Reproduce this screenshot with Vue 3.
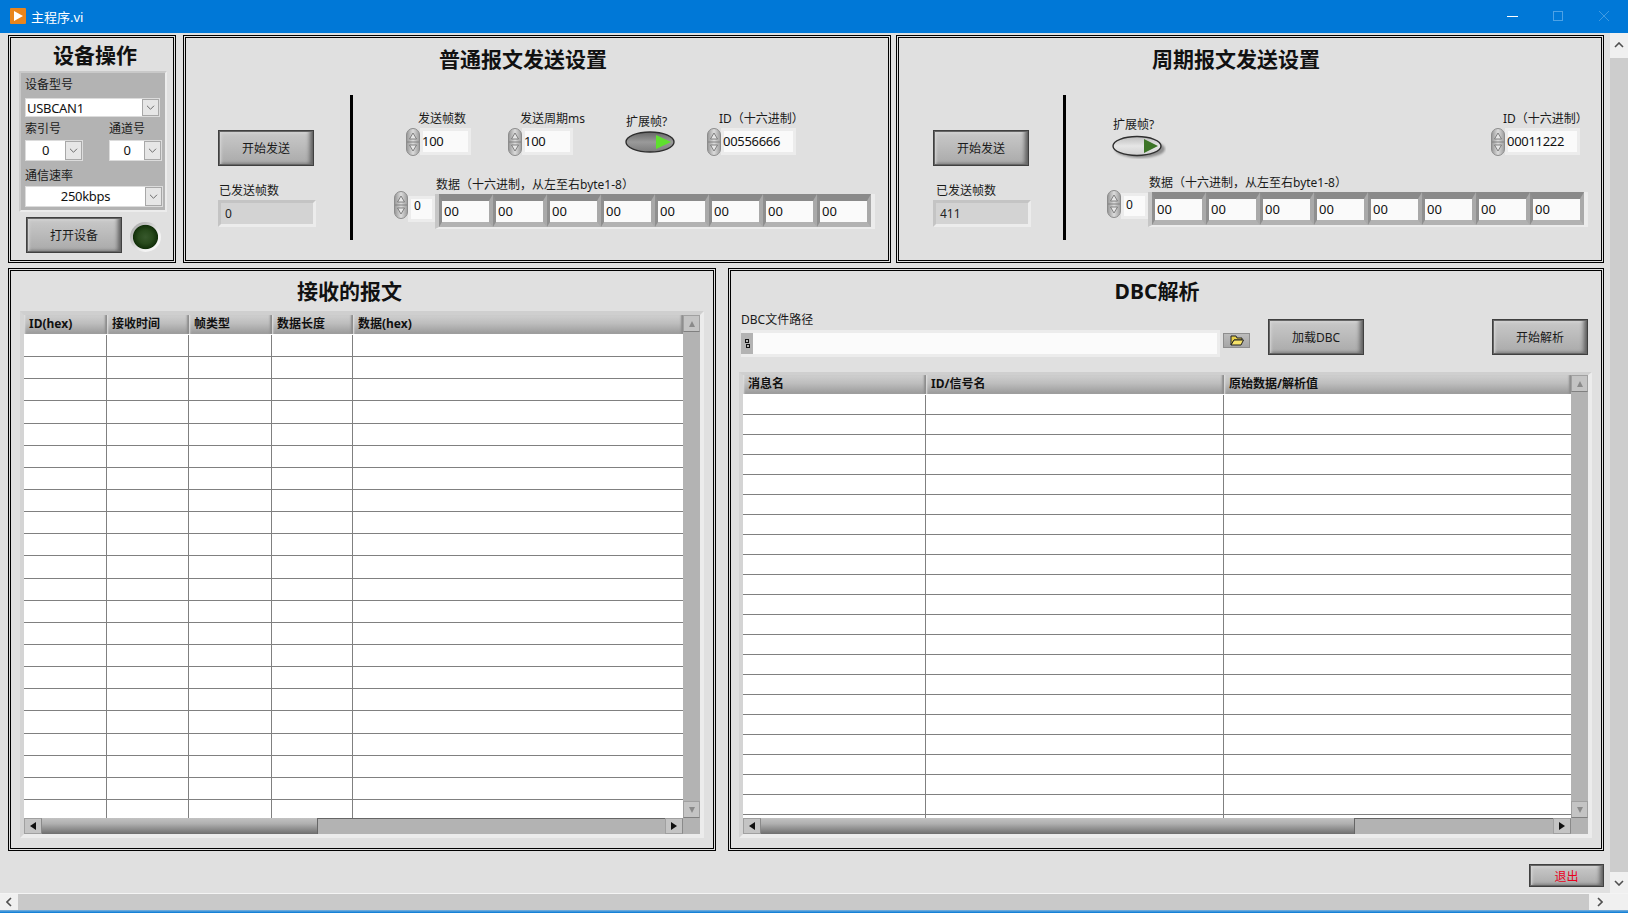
<script setup>
const bytes = Array(8).fill("00");
const recvCols = ["ID(hex)", "接收时间", "帧类型", "数据长度", "数据(hex)"];
const dbcCols = ["消息名", "ID/信号名", "原始数据/解析值"];
const recvRows = 22;
const dbcRows = 22;
</script>

<template>
  <div class="window">
    <svg class="defs">
      <defs>
        <linearGradient id="spinFill" x1="0" x2="1" y1="0" y2="0">
          <stop offset="0" stop-color="#969696" />
          <stop offset="0.5" stop-color="#dcdcdc" />
          <stop offset="1" stop-color="#9c9c9c" />
        </linearGradient>
        <linearGradient id="togOn" x1="0" x2="0" y1="0" y2="1">
          <stop offset="0" stop-color="#666" />
          <stop offset="0.5" stop-color="#9a9a9a" />
          <stop offset="1" stop-color="#7c7c7c" />
        </linearGradient>
        <linearGradient id="togOff" x1="0" x2="0" y1="0" y2="1">
          <stop offset="0" stop-color="#bdbdbd" />
          <stop offset="0.5" stop-color="#e6e6e6" />
          <stop offset="1" stop-color="#cfcfcf" />
        </linearGradient>
        <filter id="softShadow" x="-20%" y="-40%" width="140%" height="180%">
          <feGaussianBlur stdDeviation="1.2" />
        </filter>
        <symbol id="spinner" viewBox="0 0 14 28">
          <rect x="0.5" y="0.5" width="13" height="27" rx="6.5" fill="url(#spinFill)" stroke="#8c8c8c" />
          <line x1="1" y1="14" x2="13" y2="14" stroke="#808080" />
          <polygon points="7,5 10.5,11 3.5,11" fill="#e6e6e6" stroke="#6a6a6a" stroke-width="0.8" />
          <polygon points="7,23 10.5,17 3.5,17" fill="#e6e6e6" stroke="#6a6a6a" stroke-width="0.8" />
        </symbol>
        <symbol id="chev" viewBox="0 0 17 17">
          <path d="M4.5 6.5 L8.5 10.5 L12.5 6.5" fill="none" stroke="#666" stroke-width="1.1" />
        </symbol>
      </defs>
    </svg>

    <header class="titlebar">
      <svg class="app-icon" viewBox="0 0 16 16">
        <rect width="16" height="16" rx="1" fill="#e9851c" />
        <polygon points="4,3 13,8 4,13" fill="#fff" />
      </svg>
      <span class="app-name">主程序.vi</span>
      <div class="win-btns">
        <svg class="w-min" viewBox="0 0 11 11"><line x1="0" y1="5.5" x2="11" y2="5.5" stroke="#fff" /></svg>
        <svg class="w-max" viewBox="0 0 10 10"><rect x="0.5" y="0.5" width="9" height="9" fill="none" stroke="#4da2e6" /></svg>
        <svg class="w-close" viewBox="0 0 10 10"><path d="M0 0 L10 10 M10 0 L0 10" stroke="#3f9ae2" /></svg>
      </div>
    </header>

    <div class="middle">
      <main class="content">
        <div class="top-row">
          <section class="panel device">
            <h2 class="device-title">设备操作</h2>
            <div class="group">
              <label class="lab">设备型号</label>
              <div class="select w-135 h-19 sel-first">
                <span class="sel-text left">USBCAN1</span>
                <span class="sel-btn"><svg><use href="#chev" /></svg></span>
              </div>
              <div class="two-cols">
                <div>
                  <label class="lab">索引号</label>
                  <div class="select w-58 h-21 sel-gap">
                    <span class="sel-text">0</span>
                    <span class="sel-btn"><svg><use href="#chev" /></svg></span>
                  </div>
                </div>
                <div>
                  <label class="lab">通道号</label>
                  <div class="select w-53 h-21 sel-gap">
                    <span class="sel-text">0</span>
                    <span class="sel-btn"><svg><use href="#chev" /></svg></span>
                  </div>
                </div>
              </div>
              <label class="lab lab-rate">通信速率</label>
              <div class="select w-138 h-21 sel-rate">
                <span class="sel-text">250kbps</span>
                <span class="sel-btn"><svg><use href="#chev" /></svg></span>
              </div>
            </div>
            <div class="open-row">
              <button class="lv-btn">打开设备</button>
              <span class="led"></span>
            </div>
          </section>

          <section class="panel normal">
            <h2 class="send-title">普通报文发送设置</h2>
            <div class="send-body">
              <div class="send-left">
                <button class="lv-btn">开始发送</button>
                <label class="lab sent-lab">已发送帧数</label>
                <div class="indicator">0</div>
              </div>
              <div class="divider"></div>
              <div class="send-right">
                <div class="fields fields-normal">
                  <div class="field w-65">
                    <label class="lab">发送帧数</label>
                    <div class="num-row">
                      <svg class="spin"><use href="#spinner" /></svg>
                      <div class="num">100</div>
                    </div>
                  </div>
                  <div class="field w-65">
                    <label class="lab">发送周期ms</label>
                    <div class="num-row">
                      <svg class="spin"><use href="#spinner" /></svg>
                      <div class="num">100</div>
                    </div>
                  </div>
                  <div class="toggle-field">
                    <label class="lab tog-lab">扩展帧?</label>
                    <svg class="toggle" viewBox="0 0 50 22">
                      <ellipse cx="25" cy="11" rx="24" ry="10" fill="url(#togOn)" stroke="#2e2e2e" stroke-width="1.4" />
                      <polygon points="31,4 46,11 31,18" fill="#5fe02e" />
                    </svg>
                  </div>
                  <div class="field w-89">
                    <label class="lab">ID（十六进制）</label>
                    <div class="num-row">
                      <svg class="spin"><use href="#spinner" /></svg>
                      <div class="num">00556666</div>
                    </div>
                  </div>
                </div>
                <div class="data-row">
                  <div class="index">
                    <svg class="spin"><use href="#spinner" /></svg>
                    <div class="num idx">0</div>
                  </div>
                  <div class="data-col">
                    <label class="lab data-lab">数据（十六进制，从左至右byte1-8）</label>
                    <div class="array">
                      <div v-for="(b, i) in bytes" :key="i" class="cell"><span>{{ b }}</span></div>
                    </div>
                  </div>
                </div>
              </div>
            </div>
          </section>

          <section class="panel cyclic">
            <h2 class="send-title">周期报文发送设置</h2>
            <div class="send-body">
              <div class="send-left">
                <button class="lv-btn">开始发送</button>
                <label class="lab sent-lab">已发送帧数</label>
                <div class="indicator">411</div>
              </div>
              <div class="divider"></div>
              <div class="send-right">
                <div class="fields fields-cyclic">
                  <div class="toggle-field tog-off">
                    <label class="lab tog-lab">扩展帧?</label>
                    <svg class="toggle off" viewBox="0 0 54 24">
                      <ellipse cx="28" cy="14" rx="25" ry="9" fill="#6e6e6e" opacity="0.7" filter="url(#softShadow)" />
                      <ellipse cx="25" cy="11" rx="24" ry="9.5" fill="url(#togOff)" stroke="#2e2e2e" stroke-width="1.4" />
                      <polygon points="32,4 46,11 32,18" fill="#3c7426" />
                    </svg>
                  </div>
                  <div class="field w-89">
                    <label class="lab">ID（十六进制）</label>
                    <div class="num-row">
                      <svg class="spin"><use href="#spinner" /></svg>
                      <div class="num">00011222</div>
                    </div>
                  </div>
                </div>
                <div class="data-row">
                  <div class="index">
                    <svg class="spin"><use href="#spinner" /></svg>
                    <div class="num idx">0</div>
                  </div>
                  <div class="data-col">
                    <label class="lab data-lab">数据（十六进制，从左至右byte1-8）</label>
                    <div class="array">
                      <div v-for="(b, i) in bytes" :key="i" class="cell"><span>{{ b }}</span></div>
                    </div>
                  </div>
                </div>
              </div>
            </div>
          </section>
        </div>

        <div class="bottom-row">
          <section class="panel recv">
            <h2 class="big-title">接收的报文</h2>
            <div class="frame">
              <div class="tbl-main">
                <div class="tbl-head">
                  <div v-for="c in recvCols" :key="c" class="th">{{ c }}</div>
                </div>
                <div class="tbl-body">
                  <div v-for="r in recvRows" :key="r" class="tr">
                    <div v-for="c in recvCols" :key="c" class="td"></div>
                  </div>
                </div>
                <div class="hbar">
                  <span class="hbtn"><i class="tri-l"></i></span>
                  <span class="hthumb"></span>
                  <span class="htrack"></span>
                  <span class="hbtn"><i class="tri-r"></i></span>
                </div>
              </div>
              <div class="vbar">
                <span class="vbtn"><i class="tri-u"></i></span>
                <span class="vtrack"></span>
                <span class="vbtn"><i class="tri-d"></i></span>
                <span class="vcorner"></span>
              </div>
            </div>
          </section>

          <section class="panel dbc">
            <h2 class="big-title">DBC解析</h2>
            <div class="dbc-tools">
              <div class="path-col">
                <label class="lab">DBC文件路径</label>
                <div class="path-row">
                  <div class="path-box">
                    <span class="path-icon">
                      <svg viewBox="0 0 5 10" width="5" height="10">
                        <rect x="0.5" y="0.5" width="3" height="3" fill="none" stroke="#111" />
                        <rect x="1.5" y="5.5" width="3" height="3" fill="none" stroke="#111" />
                      </svg>
                    </span>
                    <span class="path-in"></span>
                  </div>
                  <span class="folder">
                    <svg viewBox="0 0 14 11" width="14" height="11">
                      <path d="M1 1 H6 L7 3 H12 V5 H4 L1 10 Z" fill="#e6cf4a" stroke="#222" />
                      <path d="M4 5 H13.5 L11 10 H1 Z" fill="#f6e36a" stroke="#222" />
                    </svg>
                  </span>
                </div>
              </div>
              <button class="lv-btn load-btn">加载DBC</button>
              <button class="lv-btn parse-btn">开始解析</button>
            </div>
            <div class="frame">
              <div class="tbl-main">
                <div class="tbl-head">
                  <div v-for="c in dbcCols" :key="c" class="th">{{ c }}</div>
                </div>
                <div class="tbl-body">
                  <div v-for="r in dbcRows" :key="r" class="tr">
                    <div v-for="c in dbcCols" :key="c" class="td"></div>
                  </div>
                </div>
                <div class="hbar">
                  <span class="hbtn"><i class="tri-l"></i></span>
                  <span class="hthumb"></span>
                  <span class="htrack"></span>
                  <span class="hbtn"><i class="tri-r"></i></span>
                </div>
              </div>
              <div class="vbar">
                <span class="vbtn"><i class="tri-u"></i></span>
                <span class="vtrack"></span>
                <span class="vbtn"><i class="tri-d"></i></span>
                <span class="vcorner"></span>
              </div>
            </div>
          </section>
        </div>

        <div class="footer">
          <button class="lv-btn exit-btn">退出</button>
        </div>
      </main>

      <aside class="page-vbar">
        <span class="arrow-box top">
          <svg viewBox="0 0 10 6" width="10" height="6"><path d="M1 5 L5 1 L9 5" fill="none" stroke="#505050" stroke-width="1.6" /></svg>
        </span>
        <span class="page-vthumb"></span>
        <span class="arrow-box bottom">
          <svg viewBox="0 0 10 6" width="10" height="6"><path d="M1 1 L5 5 L9 1" fill="none" stroke="#505050" stroke-width="1.6" /></svg>
        </span>
      </aside>
    </div>

    <div class="page-hbar">
      <span class="arrow-h">
        <svg viewBox="0 0 6 10" width="6" height="10"><path d="M5 1 L1 5 L5 9" fill="none" stroke="#505050" stroke-width="1.6" /></svg>
      </span>
      <span class="page-hthumb"></span>
      <span class="arrow-h right">
        <svg viewBox="0 0 6 10" width="6" height="10"><path d="M1 1 L5 5 L1 9" fill="none" stroke="#505050" stroke-width="1.6" /></svg>
      </span>
      <span class="page-corner"></span>
    </div>
    <div class="win-bottom"></div>
  </div>
</template>

<style scoped>
.window {
  width: 1628px;
  height: 913px;
  display: flex;
  flex-direction: column;
  overflow: hidden;
  background: #e0e0e0;
  font-family: "Noto Sans", "Noto Sans CJK SC", sans-serif;
  font-size: 12px;
  color: #1a1a1a;
}

.defs {
  display: block;
  width: 0;
  height: 0;
}

/* title bar */
.titlebar {
  box-sizing: border-box;
  height: 33px;
  flex: none;
  display: flex;
  align-items: center;
  background: #0078d7;
  color: #fff;
  padding: 0 0 1px 10px;
}
.app-icon {
  width: 16px;
  height: 16px;
}
.app-name {
  margin-left: 5px;
  font-size: 13px;
}
.win-btns {
  margin-left: auto;
  display: flex;
  align-items: center;
  padding-right: 19px;
}
.w-min {
  width: 11px;
  height: 11px;
}
.w-max {
  width: 10px;
  height: 10px;
  margin-left: 35px;
}
.w-close {
  width: 10px;
  height: 10px;
  margin-left: 36px;
}

.middle {
  flex: none;
  height: 860px;
  display: flex;
}
.content {
  width: 1610px;
  padding: 2px 6px 0 8px;
  box-sizing: border-box;
}

.top-row {
  display: flex;
  height: 228px;
}
.bottom-row {
  display: flex;
  height: 583px;
  margin-top: 5px;
}

.panel {
  box-sizing: border-box;
  border: 3px double #000;
  height: 100%;
}
.device {
  width: 168px;
}
.normal {
  width: 708px;
  margin-left: 7px;
}
.cyclic {
  width: 708px;
  margin-left: 5px;
}
.recv {
  width: 708px;
}
.dbc {
  width: 876px;
  margin-left: 12px;
}

h2 {
  margin: 0;
  font-size: 21px;
  font-weight: 700;
  text-align: center;
  color: #111;
}

.lab {
  display: block;
  height: 14px;
  line-height: 14px;
  font-size: 12px;
  white-space: nowrap;
}

/* device panel */
.device-title {
  height: 26px;
  line-height: 26px;
  margin-top: 4px;
  padding-left: 6px;
}
.group {
  box-sizing: border-box;
  width: 148px;
  height: 141px;
  margin: 3px 0 0 8px;
  padding: 5px 0 0 6px;
  background: #b3b3b3;
  border-top: 2px solid #c9c9c9;
  border-left: 2px solid #c9c9c9;
  border-right: 2px solid #ececec;
  border-bottom: 2px solid #ececec;
}
.group .lab {
  margin-left: -2px;
}
.select {
  box-sizing: border-box;
  display: flex;
  background: #fff;
  border: 1px solid #dcdcdc;
  color: #111;
  font-size: 13px;
  letter-spacing: -0.3px;
}
.w-135 {
  width: 135px;
}
.w-58 {
  width: 58px;
}
.w-53 {
  width: 53px;
}
.w-138 {
  width: 138px;
}
.h-19 {
  height: 19px;
}
.h-21 {
  height: 21px;
}
.sel-first {
  margin: 6px 0 0 -2px;
}
.sel-gap {
  margin: 4px 0 0 -2px;
}
.sel-rate {
  margin: 3px 0 0 -2px;
}
.lab-rate {
  margin-top: 8px;
}
.two-cols {
  display: flex;
  gap: 28px;
  margin-top: 5px;
}
.sel-text {
  flex: 1;
  text-align: center;
  line-height: 18px;
}
.sel-text.left {
  text-align: left;
  padding-left: 1px;
}
.sel-btn {
  box-sizing: border-box;
  width: 17px;
  flex: none;
  background: #e6e6e6;
  border: 1px solid #a8a8a8;
  display: flex;
  align-items: center;
  justify-content: center;
}
.sel-btn svg {
  width: 15px;
  height: 15px;
}
.open-row {
  display: flex;
  align-items: flex-start;
  margin: 5px 0 0 15px;
}
.lv-btn {
  box-sizing: border-box;
  width: 96px;
  height: 36px;
  padding: 0;
  border: 1px solid #404040;
  outline: 1px solid #666;
  outline-offset: -2px;
  background: linear-gradient(180deg, #c9c9c9 0, #bdbdbd 40%, #a9a9a9 100%);
  box-shadow: inset 3px 0 3px -1px #d8d8d8, inset -5px 0 4px -2px #5c5c5c, inset 0 3px 3px -1px #dcdcdc, inset 0 -4px 3px -2px #808080;
  font-family: inherit;
  font-size: 12px;
  color: #1a1a1a;
}
.led {
  width: 31px;
  height: 30px;
  margin: 5px 0 0 8px;
  border-radius: 50%;
  background:
    radial-gradient(closest-side, #37582c 0, #284a1c 45%, #12300a 78%, transparent 84%),
    linear-gradient(135deg, #a0a0a0, #f4f4f4 70%);
}

/* send panels */
.send-title {
  height: 28px;
  line-height: 28px;
  margin-top: 7px;
  padding-right: 28px;
}
.send-body {
  display: flex;
  margin-top: 22px;
}
.send-left {
  width: 164px;
  box-sizing: border-box;
  padding: 35px 0 0 32px;
}
.cyclic .send-left {
  padding-left: 34px;
}
.sent-lab {
  margin-top: 18px;
  padding-left: 1px;
}
.cyclic .sent-lab {
  padding-left: 3px;
}
.indicator {
  box-sizing: border-box;
  width: 98px;
  height: 27px;
  margin-top: 2px;
  padding-left: 4px;
  line-height: 21px;
  font-size: 12px;
  background: #d3d3d3;
  border: 3px solid #ececec;
  border-top-color: #c4c4c4;
  border-left-color: #c4c4c4;
  color: #222;
}
.divider {
  width: 3px;
  height: 145px;
  flex: none;
  background: #000;
}
.send-right {
  padding-top: 17px;
  flex: 1;
}
.fields {
  display: flex;
  height: 43px;
}
.fields-normal {
  padding-left: 53px;
}
.fields-normal .field + .field {
  margin-left: 37px;
}
.fields-normal .toggle-field {
  margin-left: 52px;
}
.fields-normal .toggle-field + .field {
  margin-left: 32px;
}
.fields-cyclic {
  padding-left: 46px;
  width: 468px;
  box-sizing: content-box;
  justify-content: space-between;
}
.field .lab {
  padding-left: 12px;
}
.w-65 {
  width: 65px;
}
.w-89 {
  width: 89px;
}
.num-row {
  display: flex;
  margin-top: 2px;
}
.spin {
  width: 14px;
  height: 28px;
  flex: none;
}
.num {
  box-sizing: border-box;
  flex: 1;
  height: 27px;
  background: #fafafa;
  border: 3px solid #ececec;
  line-height: 21px;
  font-size: 13px;
  letter-spacing: -0.3px;
  text-indent: -1px;
  color: #111;
}
.toggle-field .lab {
  margin-top: 3px;
  margin-left: 1px;
  padding-left: 0;
}
.toggle {
  display: block;
  width: 50px;
  height: 22px;
  margin-top: 2px;
}
.tog-off .lab {
  margin-top: 6px;
}
.toggle.off {
  width: 54px;
  height: 24px;
  margin-top: 3px;
}
.data-row {
  display: flex;
  margin-top: 23px;
  padding-left: 41px;
}
.cyclic .data-row {
  margin-top: 21px;
}
.index {
  display: flex;
  align-items: flex-start;
  margin-top: 13px;
}
.cyclic .index {
  margin-top: 14px;
}
.idx {
  flex: none;
  width: 27px;
  margin-top: 5px;
  height: 26px;
  padding-left: 3px;
  font-size: 12px;
  line-height: 13px;
  text-indent: 0;
  background: #fafafa;
}
.cyclic .idx {
  margin-top: 3px;
  padding-left: 2px;
  line-height: 17px;
}
.data-lab {
  margin-left: 1px;
}
.array {
  box-sizing: border-box;
  width: 440px;
  height: 35px;
  margin-top: 2px;
  display: flex;
  background: #a8a8a8;
  border-left: 4px solid #c6c6c6;
  border-right: 4px solid #ececec;
  border-bottom: 2px solid #ececec;
}
.cell {
  box-sizing: border-box;
  width: 54px;
  height: 33px;
  border-style: solid;
  border-width: 7px 4px 5px 3px;
  border-color: #8a8a8a #a9a9a9 #b2b2b2 #8f8f8f;
  background: #fafafa;
  line-height: 21px;
  font-size: 13px;
  padding-left: 2px;
  color: #111;
}

/* receive and dbc panels */
.big-title {
  height: 28px;
  line-height: 28px;
  margin-top: 6px;
}
.recv .big-title {
  padding-right: 25px;
}
.dbc .big-title {
  padding-right: 18px;
}
.frame {
  box-sizing: border-box;
  display: flex;
  border-style: solid;
  border-color: #cfcfcf #ececec #ececec #d4d4d4;
}
.recv .frame {
  width: 684px;
  height: 527px;
  margin: 6px 0 0 9px;
  border-width: 4px 4px 4px 4px;
}
.dbc .frame {
  width: 853px;
  height: 466px;
  margin: 15px 0 0 8px;
  border-width: 3px 4px 4px 4px;
}
.tbl-main {
  display: flex;
  flex-direction: column;
  flex: 1;
  min-width: 0;
}
.tbl-head,
.tr {
  display: grid;
}
.recv .tbl-head,
.recv .tr {
  grid-template-columns: 83px 82px 83px 81px 1fr;
}
.dbc .tbl-head,
.dbc .tr {
  grid-template-columns: 183px 298px 1fr;
}
.tbl-head {
  height: 19px;
  flex: none;
}
.th {
  box-sizing: border-box;
  padding-left: 5px;
  line-height: 18px;
  font-size: 12px;
  font-weight: 700;
  color: #111;
  background: linear-gradient(180deg, #cfcfcf 0, #bdbdbd 45%, #999 100%);
  box-shadow: inset 2px 0 2px -1px #e2e2e2, inset -3px 0 2px -1px #8c8c8c;
  white-space: nowrap;
}
.tbl-body {
  flex: 1;
  min-height: 0;
  overflow: hidden;
  background: #fff;
  padding-top: 1px;
}
.tr {
  box-sizing: border-box;
  border-bottom: 1px solid #808080;
}
.recv .tr {
  height: 22.15px;
}
.dbc .tr {
  height: 20px;
}
.td {
  border-right: 1px solid #808080;
}
.td:last-child {
  border-right: none;
}
.hbar {
  height: 16px;
  flex: none;
  display: flex;
  background: #b3b3b3;
}
.hbtn {
  box-sizing: border-box;
  width: 18px;
  flex: none;
  display: flex;
  align-items: center;
  justify-content: center;
  background: #c4c4c4;
  border: 1px solid #a0a0a0;
  border-right-color: #8a8a8a;
}
.hthumb {
  background: linear-gradient(180deg, #c2c2c2 0, #b0b0b0 35%, #6e6e6e 100%);
  border-right: 1px solid #666;
}
.recv .hthumb {
  width: 275px;
}
.dbc .hthumb {
  width: 593px;
}
.htrack {
  flex: 1;
  border-top: 1px solid #666;
}
.tri-l,
.tri-r,
.tri-u,
.tri-d {
  display: block;
  width: 0;
  height: 0;
}
.tri-l {
  border-top: 4px solid transparent;
  border-bottom: 4px solid transparent;
  border-right: 6px solid #111;
}
.tri-r {
  border-top: 4px solid transparent;
  border-bottom: 4px solid transparent;
  border-left: 6px solid #111;
}
.tri-u {
  border-left: 3px solid transparent;
  border-right: 3px solid transparent;
  border-bottom: 6px solid #8a8a8a;
}
.tri-d {
  border-left: 3px solid transparent;
  border-right: 3px solid transparent;
  border-top: 6px solid #8a8a8a;
}
.vbar {
  width: 17px;
  flex: none;
  display: flex;
  flex-direction: column;
  background: #b3b3b3;
}
.vbtn {
  box-sizing: border-box;
  height: 17px;
  flex: none;
  display: flex;
  align-items: center;
  justify-content: center;
  background: #c4c4c4;
  border: 1px solid #a0a0a0;
  border-bottom-color: #808080;
}
.vtrack {
  flex: 1;
}
.vcorner {
  height: 16px;
  flex: none;
}

/* dbc toolbar */
.dbc-tools {
  display: flex;
  padding: 8px 0 0 10px;
}
.path-col {
  width: 509px;
}
.path-row {
  display: flex;
  margin-top: 3px;
}
.path-box {
  box-sizing: border-box;
  width: 479px;
  height: 27px;
  display: flex;
  border: 3px solid #ececec;
  border-left: none;
}
.path-icon {
  width: 12px;
  flex: none;
  background: #b3b3b3;
  display: flex;
  align-items: center;
  justify-content: center;
}
.path-in {
  flex: 1;
  background: #fbfbfb;
}
.folder {
  box-sizing: border-box;
  width: 27px;
  height: 15px;
  margin: 3px 0 0 3px;
  display: flex;
  align-items: center;
  justify-content: center;
  background: linear-gradient(180deg, #bcbcbc, #a6a6a6);
  border: 1px solid #8e8e8e;
}
.load-btn {
  margin: 6px 0 0 18px;
}
.parse-btn {
  margin: 6px 0 0 128px;
}

.footer {
  display: flex;
  justify-content: flex-end;
  margin-top: 13px;
}
.exit-btn {
  width: 75px;
  height: 23px;
  color: #e8001c;
}

/* page scrollbars */
.page-vbar {
  width: 18px;
  flex: none;
  display: flex;
  flex-direction: column;
  background: #f0f0f0;
}
.arrow-box {
  display: flex;
  justify-content: center;
  flex: none;
}
.arrow-box.top {
  height: 25px;
  padding-top: 9px;
  box-sizing: border-box;
}
.arrow-box.bottom {
  height: 21px;
  padding-top: 8px;
  box-sizing: border-box;
}
.page-vthumb {
  flex: 1;
  background: #cdcdcd;
}
.page-hbar {
  height: 16px;
  flex: none;
  display: flex;
  background: #f0f0f0;
  border-top: 1px solid #f4f4f4;
  box-sizing: content-box;
}
.arrow-h {
  width: 18px;
  flex: none;
  display: flex;
  align-items: center;
  justify-content: center;
}
.arrow-h.right {
  width: 21px;
}
.page-hthumb {
  flex: 1;
  background: #c9c9c9;
}
.page-corner {
  width: 18px;
  flex: none;
}
.win-bottom {
  flex: 1;
  background: linear-gradient(180deg, #7fb2dc, #0078d7);
}
</style>

<style>
html,
body {
  margin: 0;
  overflow: hidden;
}
</style>
